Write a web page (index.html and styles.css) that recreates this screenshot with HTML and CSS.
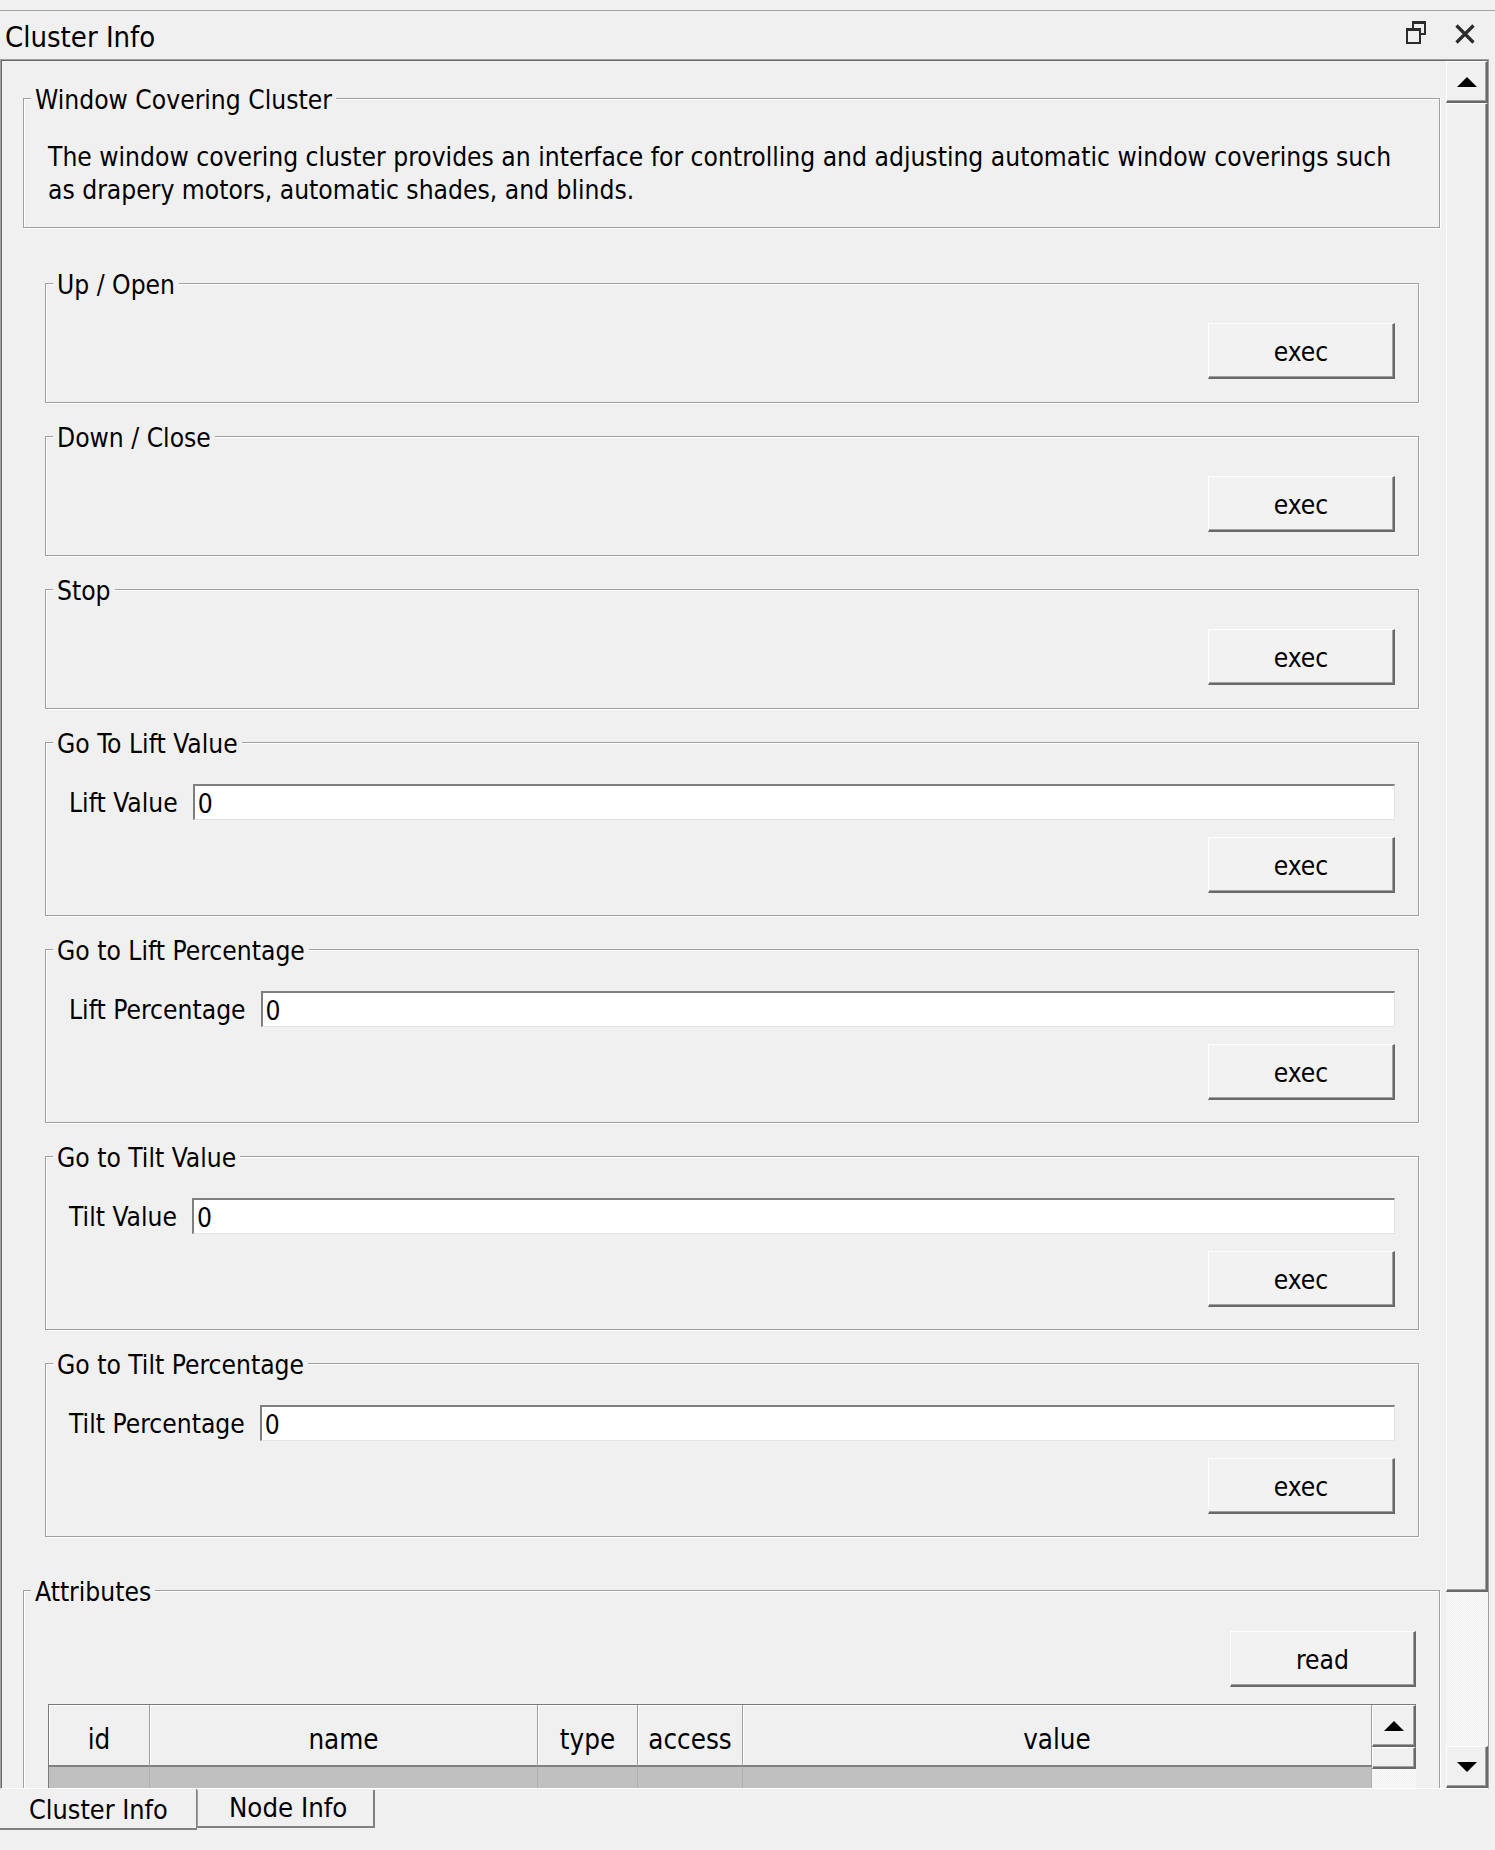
FILE: index.html
```html
<!DOCTYPE html>
<html lang="en">
<head>
<meta charset="utf-8">
<title>Cluster Info</title>
<link rel="stylesheet" href="styles.css">
</head>
<body>
<div class="top-rule"></div>
<header class="titlebar">
  <span class="title">Cluster Info</span>
  <div class="win-controls">
    <svg class="ic-restore" width="22" height="24" viewBox="0 0 22 24" aria-hidden="true">
      <g fill="#2b2b2b">
        <rect x="7" y="1" width="14" height="3"/>
        <rect x="7" y="1" width="2" height="7"/>
        <rect x="19" y="1" width="2" height="14"/>
        <rect x="16" y="13" width="5" height="2"/>
        <rect x="1" y="8" width="15" height="3"/>
        <rect x="1" y="8" width="2" height="16"/>
        <rect x="14" y="8" width="2" height="16"/>
        <rect x="1" y="22" width="15" height="2"/>
      </g>
    </svg>
    <svg class="ic-close" width="22" height="22" viewBox="0 0 22 22" aria-hidden="true">
      <path d="M2.5 2.5 L19.5 19.5 M19.5 2.5 L2.5 19.5" stroke="#2b2b2b" stroke-width="3.2" fill="none"/>
    </svg>
  </div>
</header>

<main class="panel">
  <div class="panel-inner">
    <div class="viewport">
      <section class="group wide intro">
        <div class="group-title">Window Covering Cluster</div>
        <p class="desc"><span>The window covering cluster provides an interface for controlling and adjusting automatic window coverings such</span><span>as drapery motors, automatic shades, and blinds.</span></p>
      </section>

      <section class="group cmd first">
        <div class="group-title">Up / Open</div>
        <div class="actions"><button class="btn">exec</button></div>
      </section>

      <section class="group cmd">
        <div class="group-title">Down / Close</div>
        <div class="actions"><button class="btn">exec</button></div>
      </section>

      <section class="group cmd">
        <div class="group-title">Stop</div>
        <div class="actions"><button class="btn">exec</button></div>
      </section>

      <section class="group cmd has-field">
        <div class="group-title">Go To Lift Value</div>
        <div class="field"><label class="field-label">Lift Value</label><input class="entry" type="text" value="0"></div>
        <div class="actions"><button class="btn">exec</button></div>
      </section>

      <section class="group cmd has-field">
        <div class="group-title">Go to Lift Percentage</div>
        <div class="field"><label class="field-label">Lift Percentage</label><input class="entry" type="text" value="0"></div>
        <div class="actions"><button class="btn">exec</button></div>
      </section>

      <section class="group cmd has-field">
        <div class="group-title">Go to Tilt Value</div>
        <div class="field"><label class="field-label">Tilt Value</label><input class="entry" type="text" value="0"></div>
        <div class="actions"><button class="btn">exec</button></div>
      </section>

      <section class="group cmd has-field">
        <div class="group-title">Go to Tilt Percentage</div>
        <div class="field"><label class="field-label">Tilt Percentage</label><input class="entry" type="text" value="0"></div>
        <div class="actions"><button class="btn">exec</button></div>
      </section>

      <section class="group wide attrs">
        <div class="group-title">Attributes</div>
        <div class="actions attrs-actions"><button class="btn btn-read">read</button></div>
        <div class="table">
          <div class="grid">
            <div class="thead">
              <div class="th">id</div>
              <div class="th">name</div>
              <div class="th">type</div>
              <div class="th">access</div>
              <div class="th">value</div>
            </div>
            <div class="trow"><div class="td"></div><div class="td"></div><div class="td"></div><div class="td"></div><div class="td"></div></div>
            <div class="trow"><div class="td"></div><div class="td"></div><div class="td"></div><div class="td"></div><div class="td"></div></div>
          </div>
          <div class="tscroll">
            <div class="sb-btn tsb-up"><span class="arrow-up"></span></div>
            <div class="sb-thumb tsb-thumb"></div>
            <div class="sb-track"></div>
          </div>
        </div>
      </section>
    </div>

    <div class="vscroll">
      <div class="sb-btn"><span class="arrow-up"></span></div>
      <div class="sb-thumb main-thumb"></div>
      <div class="sb-track"></div>
      <div class="sb-btn"><span class="arrow-down"></span></div>
    </div>
  </div>
</main>

<nav class="tabs">
  <div class="tab active">Cluster Info</div>
  <div class="tab">Node Info</div>
</nav>
</body>
</html>
```

FILE: styles.css
```css
html, body {
  margin: 0;
  padding: 0;
}

body {
  width: 1495px;
  height: 1850px;
  overflow: hidden;
  background: #f0f0f0;
  color: #000;
  font-family: "DejaVu Sans Condensed", "DejaVu Sans", sans-serif;
  font-stretch: condensed;
  font-size: 26.2px;
  line-height: 30px;
}

/* top strip */
.top-rule {
  height: 10px;
  border-bottom: 1px solid #a0a0a0;
}

.titlebar {
  display: flex;
  height: 48px;
}

.title {
  flex: 1;
  margin: 11px 0 0 5px;
  font-size: 29px;
  line-height: 30px;
}

.win-controls {
  display: flex;
  align-items: flex-start;
  padding-right: 19px;
}

.ic-restore {
  margin-top: 9px;
}

.ic-close {
  margin: 12px 0 0 27px;
}

/* main panel */
.panel {
  width: 1489px;
  box-sizing: border-box;
  border-top: 1px solid #a0a0a0;
  border-left: 1px solid #a0a0a0;
  border-right: 1px solid #a0a0a0;
  border-bottom: 1px solid #ffffff;
}

.panel-inner {
  display: flex;
  border-top: 1px solid #696969;
  border-left: 1px solid #696969;
  height: 1727px;
}

.viewport {
  width: 1444px;
  height: 1727px;
  overflow: hidden;
}

/* group boxes */
.group {
  border: 1px solid #a0a0a0;
  box-shadow: inset 1px 1px 0 #ffffff, 1px 1px 0 #ffffff;
}

.group-title {
  width: fit-content;
  margin: -16px 0 -2px 7px;
  padding: 2px 4px 0;
  line-height: 30px;
  background: #f0f0f0;
}

.wide {
  margin: 0 6px 0 21px;
}

.intro {
  margin-top: 37px;
  padding-bottom: 20px;
}

.desc {
  margin: 28px 0 0;
  padding: 0 24px;
  line-height: 33px;
}

.desc span {
  display: block;
  white-space: nowrap;
}

.cmd {
  margin: 33px 27px 0 43px;
  padding-bottom: 23px;
}

.cmd.first {
  margin-top: 55px;
}

.cmd.has-field {
  padding-bottom: 22px;
}

.actions {
  display: flex;
  justify-content: flex-end;
  padding-right: 23px;
  margin-top: 25px;
}

.has-field .actions {
  margin-top: 17px;
}

.field {
  display: flex;
  align-items: center;
  margin-top: 27px;
  padding: 0 23px;
}

.field-label {
  margin-right: 15px;
  padding-top: 2px;
  white-space: nowrap;
}

.entry {
  flex: 1;
  min-width: 0;
  height: 36px;
  box-sizing: border-box;
  margin: 0;
  padding: 2px 0 0 3px;
  border-style: solid;
  border-width: 2px 1px 1px 2px;
  border-color: #7f7f7f #e3e3e3 #e3e3e3 #7f7f7f;
  background: #ffffff;
  font: inherit;
  font-stretch: condensed;
  line-height: 30px;
  color: #000;
  outline: none;
}

.btn {
  width: 187px;
  height: 56px;
  box-sizing: border-box;
  margin: 0;
  padding: 3px 0 0;
  border-style: solid;
  border-width: 1px 2px 2px 1px;
  border-color: #ffffff #696969 #696969 #ffffff;
  box-shadow: inset -1px -1px 0 #a0a0a0;
  background: #f2f2f2;
  font: inherit;
  font-stretch: condensed;
  line-height: 30px;
  color: #000;
}

.btn-read {
  width: 186px;
}

/* attributes */
.attrs {
  margin-top: 53px;
  padding-bottom: 40px;
}

.attrs-actions {
  margin-top: 26px;
}

.table {
  display: flex;
  width: 1368px;
  height: 200px;
  margin: 17px 0 0 24px;
  box-sizing: border-box;
  border-top: 1px solid #7a7a7a;
  border-left: 1px solid #7a7a7a;
}

.grid {
  flex: 1;
}

.thead,
.trow {
  display: grid;
  grid-template-columns: 101px 388px 100px 105px 1fr;
}

.th {
  height: 62px;
  box-sizing: border-box;
  padding-top: 8px;
  display: flex;
  align-items: center;
  justify-content: center;
  border-right: 1px solid #a0a0a0;
  border-bottom: 2px solid #808080;
  box-shadow: inset 1px 1px 0 #ffffff;
  background: #f0f0f0;
  font-size: 27.5px;
}

.trow {
  height: 40px;
  background: #c0c0c0;
}

.td {
  border-right: 1px solid #b0b0b0;
}

.tscroll {
  width: 44px;
  display: flex;
  flex-direction: column;
}

.tsb-up {
  height: 43px;
}

.tsb-thumb {
  height: 22px;
}

/* scrollbars */
.vscroll {
  width: 42px;
  height: 1727px;
  display: flex;
  flex-direction: column;
}

.sb-btn,
.sb-thumb {
  box-sizing: border-box;
  border-style: solid;
  border-width: 1px 2px 2px 1px;
  border-color: #ffffff #696969 #696969 #ffffff;
  box-shadow: inset -1px -1px 0 #a0a0a0;
  background: #f0f0f0;
}

.sb-btn {
  height: 42px;
  flex: none;
  display: flex;
  align-items: center;
  justify-content: center;
}

.main-thumb {
  height: 1489px;
  flex: none;
}

.sb-track {
  flex: 1;
  background: repeating-conic-gradient(#f0f0f0 0 25%, #fbfbfb 0 50%) 0 0 / 2px 2px;
}

.arrow-up {
  width: 0;
  height: 0;
  border-left: 10.5px solid transparent;
  border-right: 10.5px solid transparent;
  border-bottom: 10px solid #000;
}

.arrow-down {
  width: 0;
  height: 0;
  border-left: 10.5px solid transparent;
  border-right: 10.5px solid transparent;
  border-top: 10px solid #000;
}

/* tabs */
.tabs {
  display: flex;
  align-items: flex-start;
}

.tab {
  box-sizing: border-box;
  height: 38px;
  width: 178px;
  margin-top: 1px;
  padding: 3px 0 3px 31px;
  line-height: 30px;
  font-size: 27.3px;
  border-left: 1px solid #a0a0a0;
  border-right: 2px solid #808080;
  border-bottom: 2px solid #808080;
  white-space: nowrap;
}

.tab.active {
  width: 197px;
  height: 41px;
  margin-top: 0;
  padding: 6px 0 3px 29px;
  font-size: 26.8px;
  border-left: none;
  border-right: 1px solid #808080;
  border-bottom: 2px solid #808080;
}
```
